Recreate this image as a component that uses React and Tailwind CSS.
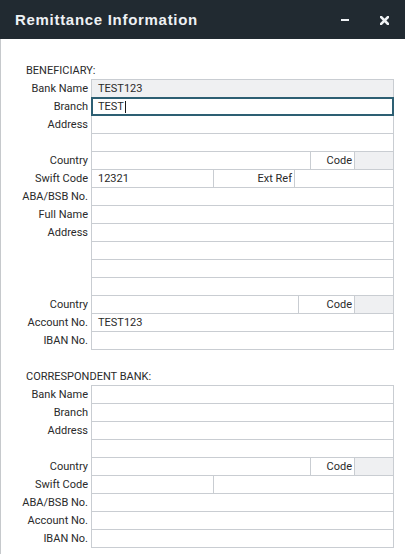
import React from 'react';

const font = { fontFamily: 'Roboto, "Liberation Sans", Arial, sans-serif' };

// one field cell; borders overlap with the neighbours by 1px
const Cell = ({ w, value, gray, focused, first }) => (
  <div
    className={`h-[19px] shrink-0 pt-px ${first ? '' : '-ml-px'} ${
      focused
        ? 'relative z-10 border-2 border-[#2d5f73] bg-white pl-[5px]'
        : `border border-[#c9cdd2] pl-[6px] ${gray ? 'bg-[#eff0f2]' : 'bg-white'}`
    } flex items-center text-[11px] text-[#2a2a2a] ${w}`}
  >
    {value}
    {focused && <span className="ml-px h-[12px] w-px bg-[#1a1a1a]" />}
  </div>
);

const Gap = ({ w, label }) => (
  <div className={`h-[19px] shrink-0 pt-px flex items-center justify-end pr-[3px] text-[11px] text-[#2a2a2a] ${w}`}>
    {label}
  </div>
);

const Row = ({ label, first, children }) => (
  <div className={`flex ${first ? '' : '-mt-px'}`}>
    <div className="w-[87px] h-[19px] shrink-0 flex items-center justify-end text-[11px] text-[#2a2a2a] pt-px">
      {label}
    </div>
    <div className="ml-[3px] flex w-[303px]">{children}</div>
  </div>
);

const Field = ({ label, value, gray, focused, first }) => (
  <Row label={label} first={first}>
    <Cell w="w-[303px]" value={value} gray={gray} focused={focused} first />
  </Row>
);

const CountryRow = ({ split }) => (
  <Row label="Country">
    <Cell w={split} first />
    <Gap w={split === 'w-[220px]' ? 'w-[44px]' : 'w-[56px]'} label="Code" />
    <Cell w="w-[40px]" gray />
  </Row>
);

const Heading = ({ children, className }) => (
  <div className={`pl-[25px] h-[15px] flex items-center text-[11px] text-[#2a2a2a] ${className}`}>
    {children}
  </div>
);

export default function App() {
  return (
    <div className="w-[405px] h-[554px] bg-white overflow-hidden" style={font}>
      <div className="h-[39px] bg-[#212a31] flex items-center pl-[15px] pr-[16px]">
        <h1
          className="flex-1 text-[15px] font-bold text-[#eef1f4] tracking-[0.7px] mt-px"
          style={{ fontFamily: '"Liberation Sans", Arial, sans-serif' }}
        >
          Remittance Information
        </h1>
        <div className="w-[8px] h-[2px] bg-[#eef1f4] mr-[31px] mt-px" />
        <svg width="9" height="9" viewBox="0 0 9 9" className="mt-px">
          <path d="M1 1 L8 8 M8 1 L1 8" stroke="#eef1f4" strokeWidth="2.6" strokeLinecap="square" />
        </svg>
      </div>

      <div className="border-l border-[#c6c9cc] h-[515px] pt-[25px]">
        <Heading>BENEFICIARY:</Heading>
        <Field label="Bank Name" value="TEST123" gray first />
        <Field label="Branch" value="TEST" focused />
        <Field label="Address" />
        <Field label="" />
        <CountryRow split="w-[220px]" />
        <Row label="Swift Code">
          <Cell w="w-[123px]" value="12321" first />
          <Gap w="w-[81px]" label="Ext Ref" />
          <Cell w="w-[100px]" />
        </Row>
        <Field label="ABA/BSB No." />
        <Field label="Full Name" />
        <Field label="Address" />
        <Field label="" />
        <Field label="" />
        <Field label="" />
        <CountryRow split="w-[208px]" />
        <Field label="Account No." value="TEST123" />
        <Field label="IBAN No." />

        <Heading className="mt-[20px]">CORRESPONDENT BANK:</Heading>
        <Field label="Bank Name" first />
        <Field label="Branch" />
        <Field label="Address" />
        <Field label="" />
        <CountryRow split="w-[220px]" />
        <Row label="Swift Code">
          <Cell w="w-[123px]" first />
          <Cell w="w-[181px]" />
        </Row>
        <Field label="ABA/BSB No." />
        <Field label="Account No." />
        <Field label="IBAN No." />
      </div>
    </div>
  );
}
